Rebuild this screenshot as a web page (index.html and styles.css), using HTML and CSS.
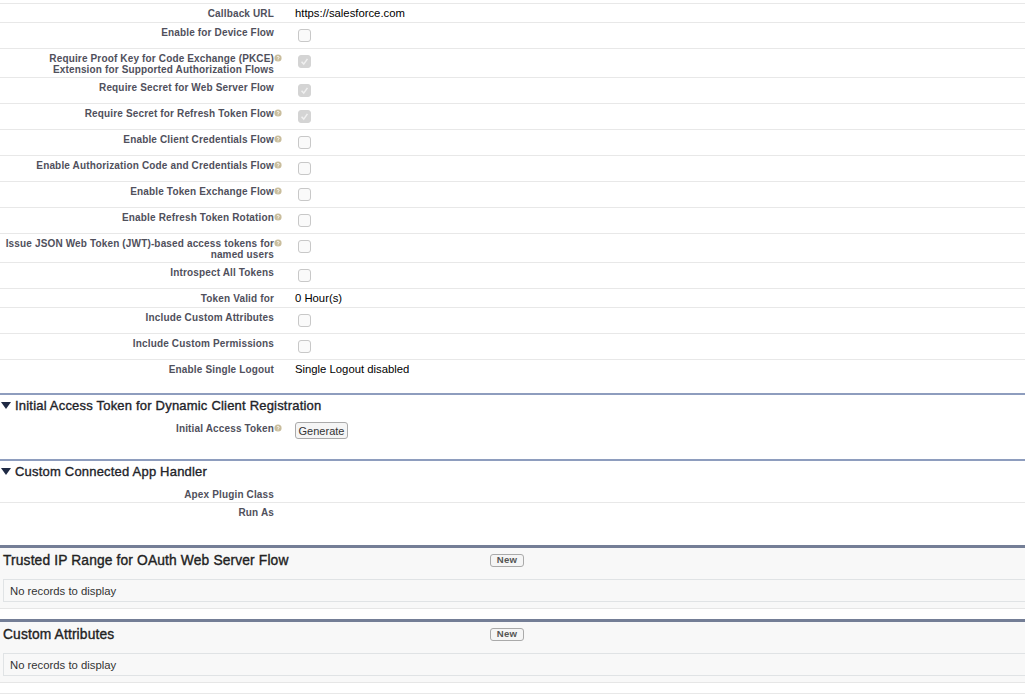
FILE: index.html
```html
<!DOCTYPE html>
<html lang="en">

<head>
    <meta charset="UTF-8">
    <title>Connected App Detail</title>
    <link rel="stylesheet" href="styles.css">
</head>

<body>
    <svg class="defs" width="0" height="0">
        <symbol id="help" viewBox="0 0 8 8">
            <circle cx="4" cy="4" r="3.6" fill="#c9bd9c"></circle>
            <path d="M2.9 3.1C3 2.3 5.1 2.2 5.1 3.3C5.1 4.1 4 4 4 4.9M4 5.5V6.3" fill="none" stroke="#fff" stroke-width="0.9"></path>
        </symbol>
        <symbol id="tick" viewBox="0 0 13 13">
            <path d="M3 6.8L5.6 9.6L10 3.4" fill="none" stroke="#f0f0f0" stroke-width="1.8"></path>
        </symbol>
    </svg>

    <div class="detail">
        <div class="row row-text">
            <div class="label">Callback URL</div>
            <div class="value">https://salesforce.com</div>
        </div>
        <div class="row row-check">
            <div class="label">Enable for Device Flow</div>
            <div class="value"><span class="check"></span></div>
        </div>
        <div class="row row-two">
            <div class="label">Require Proof Key for Code Exchange (PKCE)<svg class="help"><use href="#help"></use></svg><br>Extension for Supported Authorization Flows</div>
            <div class="value"><span class="check checked"><svg><use href="#tick"></use></svg></span></div>
        </div>
        <div class="row row-check">
            <div class="label">Require Secret for Web Server Flow</div>
            <div class="value"><span class="check checked"><svg><use href="#tick"></use></svg></span></div>
        </div>
        <div class="row row-check">
            <div class="label">Require Secret for Refresh Token Flow<svg class="help"><use href="#help"></use></svg></div>
            <div class="value"><span class="check checked"><svg><use href="#tick"></use></svg></span></div>
        </div>
        <div class="row row-check">
            <div class="label">Enable Client Credentials Flow<svg class="help"><use href="#help"></use></svg></div>
            <div class="value"><span class="check"></span></div>
        </div>
        <div class="row row-check">
            <div class="label">Enable Authorization Code and Credentials Flow<svg class="help"><use href="#help"></use></svg></div>
            <div class="value"><span class="check"></span></div>
        </div>
        <div class="row row-check">
            <div class="label">Enable Token Exchange Flow<svg class="help"><use href="#help"></use></svg></div>
            <div class="value"><span class="check"></span></div>
        </div>
        <div class="row row-check">
            <div class="label">Enable Refresh Token Rotation<svg class="help"><use href="#help"></use></svg></div>
            <div class="value"><span class="check"></span></div>
        </div>
        <div class="row row-two">
            <div class="label">Issue JSON Web Token (JWT)-based access tokens for<svg class="help"><use href="#help"></use></svg><br>named users</div>
            <div class="value"><span class="check"></span></div>
        </div>
        <div class="row row-check">
            <div class="label">Introspect All Tokens</div>
            <div class="value"><span class="check"></span></div>
        </div>
        <div class="row row-text">
            <div class="label">Token Valid for</div>
            <div class="value">0 Hour(s)</div>
        </div>
        <div class="row row-check">
            <div class="label">Include Custom Attributes</div>
            <div class="value"><span class="check"></span></div>
        </div>
        <div class="row row-check">
            <div class="label">Include Custom Permissions</div>
            <div class="value"><span class="check"></span></div>
        </div>
        <div class="row row-last">
            <div class="label">Enable Single Logout</div>
            <div class="value">Single Logout disabled</div>
        </div>
    </div>

    <div class="section section-token">
        <h3 class="section-title"><span class="twist"></span>Initial Access Token for Dynamic Client Registration</h3>
        <div class="row-plain row-button">
            <div class="label">Initial Access Token<svg class="help"><use href="#help"></use></svg></div>
            <div class="value"><button class="btn btn-generate" type="button">Generate</button></div>
        </div>
    </div>

    <div class="section section-handler">
        <h3 class="section-title"><span class="twist"></span>Custom Connected App Handler</h3>
        <div class="row-plain row-apex">
            <div class="label">Apex Plugin Class</div>
        </div>
        <div class="row-plain row-runas">
            <div class="label">Run As</div>
        </div>
    </div>

    <div class="related">
        <div class="related-head">
            <h3>Trusted IP Range for OAuth Web Server Flow</h3>
            <button class="btn btn-new" type="button">New</button>
        </div>
        <div class="empty">No records to display</div>
    </div>

    <div class="related">
        <div class="related-head">
            <h3>Custom Attributes</h3>
            <button class="btn btn-new" type="button">New</button>
        </div>
        <div class="empty">No records to display</div>
    </div>

    <div class="related-end"></div>
</body>

</html>
```

FILE: styles.css
```css
body {
    font-family: 'Liberation Sans', Arial, sans-serif;
    font-size: 12px;
    color: #000;
    background-color: #fff;
    margin: 0;
    height: 694px;
    overflow: hidden;
}

.defs {
    display: block;
    height: 0;
}

.detail {
    padding-top: 3px;
}

.row,
.row-plain {
    display: grid;
    grid-template-columns: 274px 1fr;
    column-gap: 21px;
    box-sizing: border-box;
}

.row {
    border-top: 1px solid #e8e8e8;
}

.row-text {
    height: 19px;
}

.row-check {
    height: 26px;
}

.row-two {
    height: 29px;
}

.row-last {
    height: 34px;
}

.label {
    font-size: 10px;
    font-weight: bold;
    color: #50505c;
    text-align: right;
    line-height: 11px;
    padding-top: 4px;
    letter-spacing: 0.15px;
    white-space: nowrap;
}

.value {
    font-size: 11.3px;
    line-height: 14px;
    padding-top: 2px;
}

.help {
    width: 8px;
    height: 8px;
    margin-right: -8px;
}

.check {
    display: block;
    box-sizing: border-box;
    width: 13px;
    height: 13px;
    margin: 4px 0 0 3px;
    border: 1px solid #c8c8c8;
    border-radius: 3px;
    background-color: #fafafa;
}

.check.checked {
    border-color: #d4d4d4;
    background-color: #d4d4d4;
}

.check svg {
    display: block;
    width: 11px;
    height: 11px;
}

.section {
    border-top: 2px solid #8e9dbe;
}

.section-title {
    display: flex;
    align-items: center;
    margin: 0;
    font-size: 13px;
    font-weight: normal;
    letter-spacing: 0.2px;
    -webkit-text-stroke: 0.35px;
    color: #222329;
    line-height: 15px;
    padding: 3px 0 1px 1px;
}

.twist {
    width: 0;
    height: 0;
    border-left: 5px solid transparent;
    border-right: 5px solid transparent;
    border-top: 7px solid #1f2a44;
    margin-right: 4px;
}

.section-token {
    height: 64px;
}

.row-button {
    padding-top: 5px;
}

.row-button .value {
    padding-top: 3px;
}

.btn {
    font-family: 'Liberation Sans', Arial, sans-serif;
    color: #333435;
    background-color: #f5f5f5;
    border: 1px solid #aaa;
    border-radius: 3px;
    padding: 0;
    cursor: pointer;
}

.btn-generate {
    width: 53px;
    height: 17px;
    font-size: 11px;
}

.section-handler {
    height: 84px;
}

.row-apex {
    height: 20px;
    padding-top: 2px;
    margin-top: 3px;
    border-bottom: 1px solid #e8e8e8;
}

.related {
    box-sizing: border-box;
    height: 64px;
    margin-bottom: 10px;
    background-color: #f8f8f8;
    border-top: 3px solid #747e96;
    border-bottom: 1px solid #e6e6e6;
}

.related-head {
    display: grid;
    grid-template-columns: 490px auto 1fr;
    align-items: center;
    height: 24px;
}

.related-head h3 {
    margin: 0;
    padding-left: 3px;
    font-size: 13.8px;
    font-weight: normal;
    letter-spacing: 0.14px;
    -webkit-text-stroke: 0.35px;
    color: #222;
}

.btn-new {
    width: 34px;
    height: 13px;
    font-size: 9.6px;
    font-weight: bold;
    letter-spacing: 0.3px;
    line-height: 10px;
    color: #555;
}

.empty {
    box-sizing: border-box;
    height: 23px;
    margin: 7px 0 0 3px;
    padding-left: 6px;
    line-height: 23px;
    font-size: 11.3px;
    color: #333;
    border: 1px solid #e0e3e5;
    border-right: none;
}

.related-end {
    border-top: 1px solid #e8e8e8;
}
```
